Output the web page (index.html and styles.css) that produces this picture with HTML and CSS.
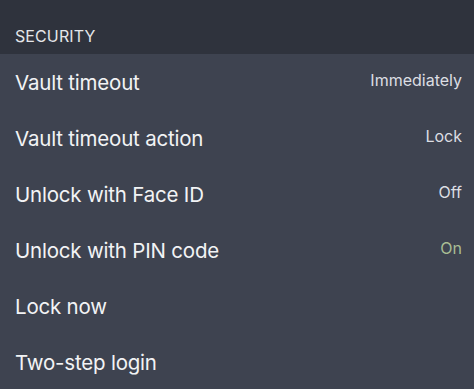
FILE: index.html
```html
<!DOCTYPE html>
<html>
<head>
<meta charset="utf-8">
<link rel="stylesheet" href="styles.css">
</head>
<body>
<div class="section-header">SECURITY</div>
<ul class="list">
  <li class="row"><span class="label">Vault timeout</span><span class="value">Immediately</span></li>
  <li class="row"><span class="label">Vault timeout action</span><span class="value">Lock</span></li>
  <li class="row"><span class="label">Unlock with Face ID</span><span class="value">Off</span></li>
  <li class="row"><span class="label">Unlock with PIN code</span><span class="value on">On</span></li>
  <li class="row"><span class="label">Lock now</span></li>
  <li class="row"><span class="label">Two-step login</span></li>
</ul>
</body>
</html>
```
FILE: styles.css
```css
html, body {
  margin: 0;
  padding: 0;
  background: #3e4350;
  font-family: Inter, "Open Sans", "Liberation Sans", sans-serif;
  width: 474px;
  height: 389px;
  overflow: hidden;
}
.section-header {
  background: #2f333d;
  height: 54px;
  box-sizing: border-box;
  padding: 26px 15px 0;
  color: #e4e6ea;
  font-size: 16px;
  line-height: 20px;
  letter-spacing: 0.1px;
}
.list {
  list-style: none;
  margin: 0;
  padding: 0;
}
.row {
  height: 56px;
  display: flex;
  align-items: center;
  justify-content: space-between;
  padding: 0 12px 0 15px;
}
.label {
  color: #f2f3f5;
  font-size: 20.5px;
  letter-spacing: -0.2px;
}
.value {
  color: #dcdee3;
  font-size: 16px;
  position: relative;
  top: -2px;
}
.value.on {
  color: #a9bd94;
}
```
